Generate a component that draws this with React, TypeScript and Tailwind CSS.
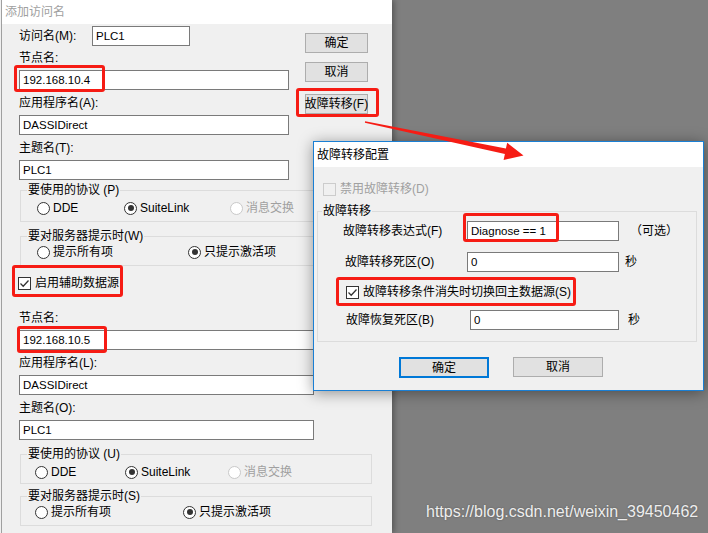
import React from "react";

function Radio({ on = false, dis = false, children, cls = "" }: { on?: boolean; dis?: boolean; children: React.ReactNode; cls?: string }) {
  return (
    <div className={`flex items-center gap-[3px] shrink-0 ${cls}`}>
      <span className={`w-[13px] h-[13px] rounded-full border flex items-center justify-center bg-white ${dis ? "border-[#c9c9c9]" : "border-[#333333]"}`}>
        {on && <span className="w-[6px] h-[6px] rounded-full bg-[#333333]" />}
      </span>
      <span className={`whitespace-nowrap ${dis ? "text-[#a0a0a0]" : "text-black"}`}>{children}</span>
    </div>
  );
}

function Check({ on = false, dis = false, children, cls = "" }: { on?: boolean; dis?: boolean; children: React.ReactNode; cls?: string }) {
  return (
    <div className={`flex items-center gap-[4px] h-[16px] ${cls}`}>
      <span className={`w-[13px] h-[13px] border flex items-center justify-center ${dis ? "border-[#cccccc] bg-[#f0f0f0]" : "border-[#333333] bg-white"}`}>
        {on && (
          <svg width="11" height="11" viewBox="0 0 11 11">
            <polyline points="1.5,5.5 4.2,8.2 9.5,2.5" fill="none" stroke="#333333" strokeWidth="1.3" />
          </svg>
        )}
      </span>
      <span className={`whitespace-nowrap ${dis ? "text-[#a0a0a0]" : "text-black"}`}>{children}</span>
    </div>
  );
}

function Input({ value, cls = "" }: { value: string; cls?: string }) {
  return (
    <div className={`h-[20px] border border-[#7a7a7a] bg-white pl-[3px] flex items-center text-[11.5px] text-black whitespace-nowrap overflow-hidden ${cls}`}>
      {value}
    </div>
  );
}

function Label({ children, cls = "h-[25px]" }: { children: React.ReactNode; cls?: string }) {
  return <div className={`flex items-center whitespace-nowrap ${cls}`}>{children}</div>;
}

function Group({ label, children, cls = "", lcls = "ml-[6px]" }: { label: string; children: React.ReactNode; cls?: string; lcls?: string }) {
  return (
    <fieldset className={`border border-[#dcdcdc] ${cls}`}>
      <legend className={`px-[1px] leading-[16px] whitespace-nowrap ${lcls}`}>{label}</legend>
      {children}
    </fieldset>
  );
}

function Btn({ children, cls = "" }: { children: React.ReactNode; cls?: string }) {
  return (
    <div className={`flex items-center justify-center whitespace-nowrap bg-[#e1e1e1] text-black ${cls}`}>{children}</div>
  );
}

export default function App() {
  return (
    <div className="relative w-[708px] h-[533px] overflow-hidden bg-[#7f7f7f] flex text-[12px] leading-[16px] text-black font-[family-name:'Liberation_Sans','Noto_Sans_CJK_SC',sans-serif]">
      {/* Left dialog */}
      <div className="relative z-10 w-[392px] h-[533px] pl-[1px] bg-[#f0f0f0] shadow-[2px_0_6px_rgba(0,0,0,0.35)] shrink-0">
        <div className="h-full border-l border-[#a0a0a0] flex flex-col">
          <div className="h-[24px] bg-white pl-[3px] flex items-center text-[#a0a0a0]">添加访问名</div>
          <div className="pl-[17px] pt-[2px] flex flex-col">
            <div className="flex">
              <div className="w-[270px] flex flex-col">
                <div className="flex items-center h-[20px]">
                  <div className="w-[73px] whitespace-nowrap">访问名(M):</div>
                  <Input value="PLC1" cls="w-[98px]" />
                </div>
                <Label cls="h-[24px]">节点名:</Label>
                <Input value="192.168.10.4" />
                <Label>应用程序名(A):</Label>
                <Input value="DASSIDirect" />
                <Label>主题名(T):</Label>
                <Input value="PLC1" />
              </div>
              <div className="ml-[16px] pt-[7px] flex flex-col">
                <Btn cls="w-[63px] h-[20px] border border-[#adadad]">确定</Btn>
                <Btn cls="w-[63px] h-[20px] border border-[#adadad] mt-[9px]">取消</Btn>
                <Btn cls="w-[63px] h-[20px] border border-[#adadad] mt-[12px]">故障转移(F)</Btn>
              </div>
            </div>

            <Group label="要使用的协议 (P)" cls="mt-[2px] ml-[1px] w-[352px]">
              <div className="flex h-[16px] mt-[2px] mb-[5px] pl-[16px]">
                <Radio cls="w-[87px]">DDE</Radio>
                <Radio on cls="w-[106px]">SuiteLink</Radio>
                <Radio dis>消息交换</Radio>
              </div>
            </Group>
            <Group label="要对服务器提示时(W)" cls="mt-[6px] ml-[1px] w-[352px]">
              <div className="flex h-[16px] mb-[5px] pl-[16px]">
                <Radio cls="w-[151px]">提示所有项</Radio>
                <Radio on>只提示激活项</Radio>
              </div>
            </Group>

            <Check on cls="mt-[9px] ml-[-1px]">启用辅助数据源</Check>

            <Label cls="h-[25px] mt-[14px]">节点名:</Label>
            <Input value="192.168.10.5" cls="w-[295px]" />
            <Label>应用程序名(L):</Label>
            <Input value="DASSIDirect" cls="w-[295px]" />
            <Label>主题名(O):</Label>
            <Input value="PLC1" cls="w-[295px]" />

            <Group label="要使用的协议 (U)" cls="mt-[6px] ml-[1px] w-[352px]">
              <div className="flex h-[16px] mt-[2px] mb-[3px] pl-[14px]">
                <Radio cls="w-[90px]">DDE</Radio>
                <Radio on cls="w-[103px]">SuiteLink</Radio>
                <Radio dis>消息交换</Radio>
              </div>
            </Group>
            <Group label="要对服务器提示时(S)" cls="mt-[4px] ml-[1px] w-[352px]">
              <div className="flex h-[16px] mb-[5px] pl-[14px]">
                <Radio cls="w-[148px]">提示所有项</Radio>
                <Radio on>只提示激活项</Radio>
              </div>
            </Group>
          </div>
        </div>
      </div>

      {/* Second dialog (window on desktop) */}
      <div className="absolute z-20 left-[313px] top-[141px] w-[391px] h-[250px] border border-[#1a7fd4] bg-[#f0f0f0] shadow-[0_2px_14px_rgba(0,0,0,0.4)] flex flex-col">
        <div className="h-[25px] bg-white pl-[3px] flex items-center">故障转移配置</div>
        <div className="px-[3px] flex flex-col">
          <Check dis cls="mt-[14px] ml-[6px]">禁用故障转移(D)</Check>
          <Group label="故障转移" cls="mt-[6px] w-[380px]" lcls="ml-[4px]">
            <div className="flex items-center h-[20px] mt-[2px] pl-[25px]">
              <div className="w-[124px] whitespace-nowrap">故障转移表达式(F)</div>
              <Input value="Diagnose == 1" cls="w-[152px]" />
              <div className="ml-[11px] whitespace-nowrap">（可选）</div>
            </div>
            <div className="flex items-center h-[20px] mt-[11px] pl-[27px]">
              <div className="w-[122px] whitespace-nowrap">故障转移死区(O)</div>
              <Input value="0" cls="w-[152px]" />
              <div className="ml-[6px]">秒</div>
            </div>
            <Check on cls="mt-[12px] ml-[28px]">故障转移条件消失时切换回主数据源(S)</Check>
            <div className="flex items-center h-[20px] mt-[10px] mb-[11px] pl-[28px]">
              <div className="w-[124px] whitespace-nowrap">故障恢复死区(B)</div>
              <Input value="0" cls="w-[149px]" />
              <div className="ml-[9px]">秒</div>
            </div>
          </Group>
          <div className="flex mt-[15px]">
            <Btn cls="ml-[82px] w-[90px] h-[21px] border-2 border-[#0078d7]">确定</Btn>
            <Btn cls="ml-[24px] w-[90px] h-[20px] border border-[#adadad]">取消</Btn>
          </div>
        </div>
      </div>

      {/* Red annotation boxes */}
      <div className="absolute z-30 left-[14px] top-[65px] w-[91px] h-[27px] border-[3px] border-[#f61c14] rounded-[3px]" />
      <div className="absolute z-30 left-[296px] top-[88px] w-[83px] h-[29px] border-[3px] border-[#f61c14] rounded-[3px]" />
      <div className="absolute z-30 left-[12px] top-[265px] w-[111px] h-[32px] border-[3px] border-[#f61c14] rounded-[3px]" />
      <div className="absolute z-30 left-[17px] top-[326px] w-[90px] h-[27px] border-[3px] border-[#f61c14] rounded-[3px]" />
      <div className="absolute z-30 left-[463px] top-[213px] w-[96px] h-[29px] border-[3px] border-[#f61c14] rounded-[3px]" />
      <div className="absolute z-30 left-[336px] top-[277px] w-[240px] h-[29px] border-[3px] border-[#f61c14] rounded-[3px]" />

      {/* Red arrow */}
      <svg className="absolute z-30 left-0 top-0 pointer-events-none" width="708" height="533" viewBox="0 0 708 533">
        <polygon points="364.9,122.8 365.1,121.2 505.9,148.6 507.2,142.8 523.5,155.5 503.6,160.0 504.9,154.0" fill="#f61c14" />
      </svg>

      {/* Watermark */}
      <div className="absolute z-30 left-[426px] top-[502px] text-[16px] leading-[20px] text-[#eeeeee] whitespace-nowrap [text-shadow:0_0_2px_rgba(0,0,0,0.35)]">
        https://blog.csdn.net/weixin_39450462
      </div>
    </div>
  );
}
